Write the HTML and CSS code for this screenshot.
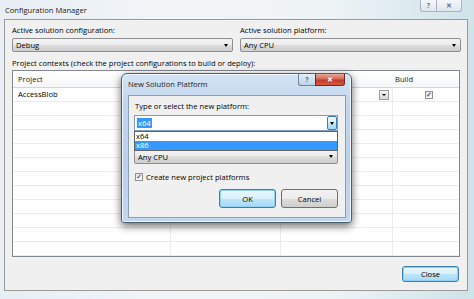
FILE: index.html
```html
<!DOCTYPE html>
<html lang="en">
<head>
  <meta charset="UTF-8" />
  <meta name="viewport" content="width=device-width, initial-scale=1.0"/>
  <title>Configuration Manager</title>
  <link rel="stylesheet" href="styles.css">
</head>
<body>

  <div class="screen">

    <!-- Window title -->
    <div class="titlebar">
      <span class="title">Configuration Manager</span>
      <div class="caption-btns">
        <span class="cap cap-help">?</span>
        <span class="cap cap-close">&#x2715;</span>
      </div>
    </div>

    <!-- Main client area -->
    <div class="client">
      <div class="top-fields">
        <div class="field">
          <label>Active solution configuration:</label>
          <div class="combo">Debug<span class="arrow"></span></div>
        </div>
        <div class="field">
          <label>Active solution platform:</label>
          <div class="combo">Any CPU<span class="arrow"></span></div>
        </div>
      </div>

      <div class="grid-label">Project contexts (check the project configurations to build or deploy):</div>

      <!-- columns 2 and 3 are covered by the dialog -->
      <div class="grid">
        <div class="grid-row grid-head">
          <div class="cell">Project</div>
          <div class="cell"></div>
          <div class="cell"></div>
          <div class="cell">Build</div>
        </div>
        <div class="grid-row">
          <div class="cell">AccessBlob</div>
          <div class="cell"></div>
          <div class="cell cell-drop"><span class="mini-drop"><span class="arrow"></span></span></div>
          <div class="cell cell-check"><span class="box">&#x2713;</span></div>
        </div>
        <div class="grid-row"><div class="cell"></div><div class="cell"></div><div class="cell"></div><div class="cell"></div></div>
        <div class="grid-row"><div class="cell"></div><div class="cell"></div><div class="cell"></div><div class="cell"></div></div>
        <div class="grid-row"><div class="cell"></div><div class="cell"></div><div class="cell"></div><div class="cell"></div></div>
        <div class="grid-row"><div class="cell"></div><div class="cell"></div><div class="cell"></div><div class="cell"></div></div>
        <div class="grid-row"><div class="cell"></div><div class="cell"></div><div class="cell"></div><div class="cell"></div></div>
        <div class="grid-row"><div class="cell"></div><div class="cell"></div><div class="cell"></div><div class="cell"></div></div>
        <div class="grid-row"><div class="cell"></div><div class="cell"></div><div class="cell"></div><div class="cell"></div></div>
        <div class="grid-row"><div class="cell"></div><div class="cell"></div><div class="cell"></div><div class="cell"></div></div>
        <div class="grid-row"><div class="cell"></div><div class="cell"></div><div class="cell"></div><div class="cell"></div></div>
        <div class="grid-row"><div class="cell"></div><div class="cell"></div><div class="cell"></div><div class="cell"></div></div>
        <div class="grid-row"><div class="cell"></div><div class="cell"></div><div class="cell"></div><div class="cell"></div></div>
      </div>

      <div class="footer">
        <button class="btn btn-default btn-close">Close</button>
      </div>
    </div>

    <!-- New Solution Platform dialog -->
    <div class="dialog">
      <div class="dlg-titlebar">
        <span class="title">New Solution Platform</span>
        <div class="caption-btns">
          <span class="cap dlg-help">?</span>
          <span class="cap dlg-close">&#x2715;</span>
        </div>
      </div>
      <div class="dlg-client">
        <label class="dlg-label">Type or select the new platform:</label>
        <div class="edit-combo">
          <span class="sel">x64</span>
          <span class="drop-btn"><span class="arrow"></span></span>
        </div>
        <!-- label hidden under the open list -->
        <div class="dlg-spacer"></div>
        <div class="combo combo-dlg">Any CPU<span class="arrow"></span></div>
        <label class="check-row"><span class="box">&#x2713;</span>Create new project platforms</label>
        <div class="dlg-buttons">
          <button class="btn btn-default">OK</button>
          <button class="btn">Cancel</button>
        </div>

        <!-- open drop-down list -->
        <ul class="droplist">
          <li>x64</li>
          <li class="selected">x86</li>
        </ul>
      </div>
    </div>

  </div>

</body>
</html>
```

FILE: styles.css
```css
body {
  margin: 0;
  font-family: "Open Sans", "Noto Sans", sans-serif;
  font-size: 7.6px;
  color: #000;
}

/* Glass frame behind everything */
.screen {
  position: relative;
  width: 474px;
  height: 299px;
  overflow: hidden;
  display: flex;
  flex-direction: column;
  background: linear-gradient(to right, #e7eef4 0%, #f2f5f8 35%, #eef3f6 70%, #d9e9ee 90%, #cfe3ea 100%);
}

/* Title bar */
.titlebar {
  height: 19px;
  display: flex;
  justify-content: space-between;
  align-items: flex-start;
  padding: 0 12px 0 5px;
}

.title {
  padding-top: 5px;
  line-height: 10px;
  color: #1a1a1a;
}

.caption-btns {
  display: flex;
}

.cap {
  height: 12px;
  display: flex;
  align-items: center;
  justify-content: center;
  font-size: 7px;
  font-weight: bold;
  color: #6b7380;
  border: 1px solid #a9b4c0;
  border-top: none;
  background: linear-gradient(#f4f7fa, #dfe6ed);
  box-sizing: border-box;
}

.cap-help {
  width: 17px;
  border-radius: 0 0 0 3px;
}

.cap-close {
  width: 25px;
  border-left: none;
  border-radius: 0 0 3px 0;
}

/* Client area */
.client {
  margin: 0 6px 8px 4px;
  border: 1px solid #9a9a9a;
  background-color: #f0f0f0;
  padding: 5px 6px 8px 7px;
  display: flex;
  flex-direction: column;
}

.top-fields {
  display: grid;
  grid-template-columns: 1fr 1fr;
  gap: 7px;
}

label {
  display: block;
  line-height: 10px;
}

.field label {
  margin-bottom: 3px;
}

.combo {
  position: relative;
  height: 14px;
  box-sizing: border-box;
  border: 1px solid #8e8f8f;
  border-radius: 2px;
  padding-left: 3px;
  line-height: 12px;
  background: linear-gradient(#f2f2f2 0%, #ebebeb 50%, #dddddd 50%, #cfcfcf 100%);
}

.combo .arrow {
  position: absolute;
  right: 4px;
  top: 5px;
}

.arrow {
  display: inline-block;
  width: 0;
  height: 0;
  border-left: 2.5px solid transparent;
  border-right: 2.5px solid transparent;
  border-top: 3px solid #000;
}

.grid-label {
  margin-top: 6px;
  line-height: 10px;
}

/* Project grid */
.grid {
  margin-top: 2px;
  margin-right: 1px;
  border: 1px solid #828790;
  background-color: white;
}

.grid-row {
  display: grid;
  grid-template-columns: 157px 110px 112px 1fr;
  height: 14px;
  box-sizing: border-box;
  border-bottom: 1px solid #ececec;
  line-height: 13px;
}

.grid-row .cell {
  padding-left: 5px;
  border-left: 1px solid #ececec;
}

.grid-row .cell:first-child {
  border-left: none;
}

.grid-head {
  height: 17px;
  line-height: 16px;
  border-bottom: 1px solid #d5d5d5;
  background: linear-gradient(#ffffff, #f6f7f8);
  color: #222;
}

.grid-head .cell {
  border-left: none;
}

.grid-head .cell:last-child {
  padding-left: 3px;
}

.cell-drop {
  display: flex;
  justify-content: flex-end;
  align-items: center;
  padding-right: 3px;
}

.mini-drop {
  width: 10px;
  height: 10px;
  box-sizing: border-box;
  border: 1px solid #a0a0a0;
  background: linear-gradient(#f4f4f4, #d8d8d8);
  display: flex;
  align-items: center;
  justify-content: center;
}

.mini-drop .arrow {
  border-left-width: 2px;
  border-right-width: 2px;
  border-top-width: 2.5px;
}

.cell-check {
  display: flex;
  justify-content: center;
  align-items: center;
}

.box {
  width: 8px;
  height: 8px;
  box-sizing: border-box;
  border: 1px solid #8f8f8f;
  background: linear-gradient(#e4e4e4, #fafafa);
  color: #4a5f97;
  font-size: 7px;
  line-height: 6px;
  text-align: center;
  font-weight: bold;
}

.footer {
  display: flex;
  justify-content: flex-end;
  margin-top: 9px;
  padding-right: 2px;
}

/* Buttons */
.btn {
  width: 57px;
  height: 19px;
  padding: 0;
  font-family: inherit;
  font-size: 7.6px;
  color: #000;
  border: 1px solid #707070;
  border-radius: 3px;
  background: linear-gradient(#f2f2f2 0%, #ebebeb 50%, #dddddd 50%, #cfcfcf 100%);
}

.btn-default {
  border-color: #3c7fb1;
  background: linear-gradient(#eaf6fd 0%, #d9f0fc 50%, #bee6fd 50%, #a7d9f5 100%);
  box-shadow: inset 0 0 0 1px #8ed0f5;
}

.btn-close {
  height: 16px;
}

/* Dialog window (lies over the grid) */
.dialog {
  position: absolute;
  left: 121px;
  top: 73px;
  width: 231px;
  height: 150px;
  box-sizing: border-box;
  border: 1px solid #4c5d70;
  border-radius: 6px 6px 3px 3px;
  background: linear-gradient(#d3e3f3 0%, #c2d7ee 20%, #b9d1ea 60%, #c3d8ee 100%);
  box-shadow: 0 3px 9px rgba(0, 0, 0, 0.6), inset 0 0 0 1px rgba(255, 255, 255, 0.7);
  display: flex;
  flex-direction: column;
}

.dlg-titlebar {
  height: 21px;
  display: flex;
  justify-content: space-between;
  align-items: flex-start;
  padding: 0 6px 0 6px;
}

.dlg-help {
  width: 17px;
  border: 1px solid #6f86a0;
  border-top: none;
  border-right: none;
  border-radius: 0 0 0 3px;
  color: #5a6d85;
  background: linear-gradient(#e4eef8, #bcd2e8);
}

.dlg-close {
  width: 30px;
  border: 1px solid #6b2c24;
  border-top: none;
  border-radius: 0 0 3px 0;
  color: #fff;
  background: linear-gradient(#e9a99a 0%, #d46a58 45%, #c2392a 55%, #d55a44 100%);
}

.dlg-client {
  position: relative;
  flex: 1;
  margin: 0 5px 4px 6px;
  border: 1px solid #8aa0b8;
  background-color: #f0f0f0;
  padding: 5px 7px 0 5px;
}

.dlg-label {
  padding-left: 1px;
}

.dlg-spacer {
  height: 10px;
  margin-top: 3px;
}

.edit-combo {
  margin-top: 4px;
  height: 16px;
  box-sizing: border-box;
  border: 1px solid #7f9db9;
  background-color: white;
  display: flex;
  align-items: center;
  justify-content: space-between;
}

.sel {
  margin-left: 2px;
  padding: 0 1px;
  line-height: 10px;
  background-color: #3399ff;
  color: white;
}

.drop-btn {
  width: 10px;
  height: 14px;
  box-sizing: border-box;
  border: 1px solid #3c7fb1;
  border-radius: 2px;
  background: linear-gradient(#eaf6fd 0%, #d9f0fc 50%, #bee6fd 50%, #a7d9f5 100%);
  display: flex;
  align-items: center;
  justify-content: center;
}

.combo-dlg {
  margin-top: 5px;
  height: 15px;
  line-height: 14px;
}

.check-row {
  margin-top: 8px;
  display: flex;
  align-items: center;
  gap: 3px;
  padding-left: 1px;
}

.dlg-buttons {
  margin-top: 7px;
  display: flex;
  justify-content: flex-end;
  gap: 5px;
}

/* open list of the edit combo */
.droplist {
  position: absolute;
  left: 5px;
  top: 35px;
  width: 204px;
  margin: 0;
  padding: 0;
  list-style: none;
  box-sizing: border-box;
  border: 1px solid #646464;
  background-color: white;
}

.droplist li {
  height: 9px;
  line-height: 9px;
  padding-left: 1px;
}

.droplist li.selected {
  background-color: #3399ff;
  color: white;
}
```
